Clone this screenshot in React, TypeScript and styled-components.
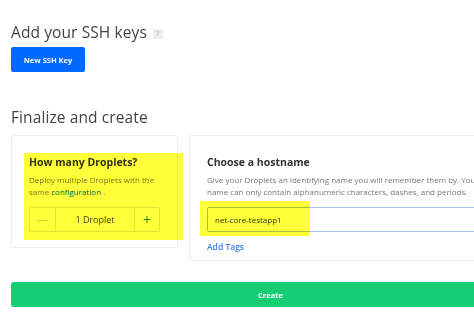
import styled, { createGlobalStyle } from 'styled-components'

const GlobalStyle = createGlobalStyle`
  html, body {
    margin: 0;
    padding: 0;
    background: #fff;
    overflow: hidden;
  }
  body {
    font-family: 'Open Sans', 'Liberation Sans', sans-serif;
    color: #333;
  }
`

const Page = styled.div`
  width: 520px;
  padding: 22px 0 0 11px;
`

const SectionTitle = styled.h2`
  margin: 0;
  display: flex;
  align-items: center;
  gap: 6px;
  font-size: 15.5px;
  line-height: 20px;
  font-weight: 400;
  color: #444;
  letter-spacing: 0.1px;
`

const HelpBadge = styled.span`
  width: 10px;
  height: 10px;
  background: #eee;
  color: #aaa;
  font-size: 7px;
  line-height: 10px;
  text-align: center;
  border-radius: 1px;
  margin-top: 3px;
`

const BlueButton = styled.button`
  margin-top: 5px;
  width: 74px;
  height: 25px;
  border: none;
  border-radius: 2px;
  background: #0069ff;
  color: #fff;
  font-family: inherit;
  font-size: 7.5px;
  font-weight: 700;
  cursor: pointer;
`

const FinalizeTitle = styled(SectionTitle)`
  margin-top: 35px;
`

const Cards = styled.div`
  margin-top: 8px;
  display: flex;
  align-items: flex-start;
  gap: 11px;
`

const Card = styled.div<{ $width: number; $height: number }>`
  position: relative;
  box-sizing: border-box;
  width: ${p => p.$width}px;
  height: ${p => p.$height}px;
  border: 1px solid #ececec;
  border-radius: 3px;
  padding: 19px 17px 0 17px;
  flex-shrink: 0;
`

const CardTitle = styled.h3`
  margin: 0;
  font-size: 10.5px;
  line-height: 14px;
  font-weight: 700;
  color: #333;
`

const CardText = styled.p`
  margin: 5px 0 0;
  font-size: 8px;
  line-height: 12px;
  color: #777;
`

const Link = styled.a`
  color: #0069ff;
  text-decoration: none;
`

const Stepper = styled.div`
  margin-top: 9px;
  display: grid;
  grid-template-columns: 25px 1fr 25px;
  width: 131px;
  height: 25px;
  box-sizing: border-box;
  border: 1px solid #e3e3e3;
  border-radius: 2px;
`

const StepCell = styled.div<{ $muted?: boolean }>`
  display: flex;
  align-items: center;
  justify-content: center;
  font-size: ${p => (p.$muted ? 12 : 9)}px;
  color: ${p => (p.$muted ? '#ccc' : '#444')};

  & + & {
    border-left: 1px solid #e3e3e3;
  }
`

const PlusCell = styled(StepCell)`
  font-size: 14px;
  color: #1b8a3e;
`

const HostInput = styled.input`
  margin-top: 9px;
  display: block;
  box-sizing: border-box;
  width: 100%;
  height: 25px;
  padding: 0 7px;
  border: 1px solid #a7c2f0;
  border-radius: 2px;
  font-family: inherit;
  font-size: 8px;
  color: #333;
  outline: none;
`

const TagLink = styled(Link)`
  display: block;
  margin-top: 9px;
  font-size: 8.5px;
  font-weight: 600;
  color: #3b7de9;
`

const Highlight = styled.div<{ $left: number; $top: number; $width: number; $height: number }>`
  position: absolute;
  left: ${p => p.$left}px;
  top: ${p => p.$top}px;
  width: ${p => p.$width}px;
  height: ${p => p.$height}px;
  background: #ffff3a;
  mix-blend-mode: multiply;
  pointer-events: none;
`

const CreateButton = styled.button`
  margin-top: 21px;
  display: block;
  width: 519px;
  height: 25px;
  border: none;
  border-radius: 3px;
  background: #15cd72;
  color: #fff;
  font-family: inherit;
  font-size: 7.5px;
  font-weight: 700;
`

export default function App() {
  return (
    <>
      <GlobalStyle />
      <Page>
        <SectionTitle>
          Add your SSH keys <HelpBadge>?</HelpBadge>
        </SectionTitle>
        <BlueButton>New SSH Key</BlueButton>

        <FinalizeTitle>Finalize and create</FinalizeTitle>
        <Cards>
          <Card $width={167} $height={113}>
            <CardTitle>How many Droplets?</CardTitle>
            <CardText>
              Deploy multiple Droplets with the same <Link href="#">configuration</Link> .
            </CardText>
            <Stepper>
              <StepCell $muted>—</StepCell>
              <StepCell>1 Droplet</StepCell>
              <PlusCell>+</PlusCell>
            </Stepper>
            <Highlight $left={12} $top={17} $width={159} $height={87} />
          </Card>

          <Card $width={308} $height={126}>
            <CardTitle>Choose a hostname</CardTitle>
            <CardText>
              Give your Droplets an identifying name you will remember them by. Your name can only
              contain alphanumeric characters, dashes, and periods.
            </CardText>
            <HostInput defaultValue="net-core-testapp1" />
            <TagLink href="#">Add Tags</TagLink>
            <Highlight $left={10} $top={65} $width={110} $height={35} />
          </Card>
        </Cards>

        <CreateButton>Create</CreateButton>
      </Page>
    </>
  )
}
